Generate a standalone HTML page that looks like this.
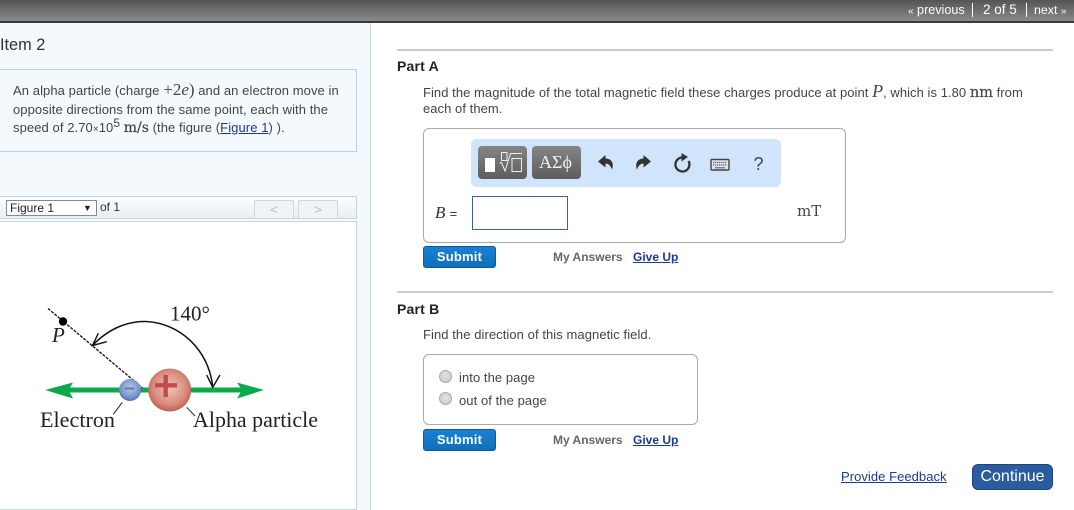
<!DOCTYPE html>
<html><head><meta charset="utf-8"><style>
html,body{margin:0;padding:0;width:1074px;height:510px;overflow:hidden;background:#fff;font-family:"Liberation Sans",sans-serif;color:#444}
.a{position:absolute;white-space:nowrap}
.t{font-size:13px;line-height:16px;letter-spacing:.07px}
.m{font-family:"Liberation Serif",serif}
.u{font-family:"DejaVu Serif",serif;letter-spacing:0}
.b{font-weight:bold}
a{color:#1c3a8c;text-decoration:underline}
.sub{position:absolute;width:71px;height:20px;background:linear-gradient(#1a80d0,#0f70bd);border:1px solid #0c5a9c;border-radius:3px;color:#fff;font:bold 13px/20px "Liberation Sans",sans-serif;text-align:center;letter-spacing:.2px}
.box{position:absolute;border:1px solid #aaa;border-radius:6px;box-sizing:border-box;background:#fff}
.hr{position:absolute;left:397px;width:656px;height:2px;background:#ccc}
.tb{position:absolute;top:146px;height:33px;width:49px;border-radius:4px;background:linear-gradient(#858585,#5d5d5d)}
.r{position:absolute;left:439px;width:11px;height:11px;border-radius:50%;background:radial-gradient(circle at 50% 40%,#e2e2e2,#c8c8c8);border:1px solid #aaa;box-sizing:content-box}
</style></head><body>
<div class="a" style="left:0;top:0;width:1074px;height:21px;background:linear-gradient(#555,#8a8a8a)"></div>
<div class="a" style="left:0;top:21px;width:1074px;height:2px;background:#3a3a3a"></div>

<div class="a" style="left:0;top:23px;width:370px;height:487px;background:#f4f9fe;border-right:1px solid #c5d5e5"></div>
<div class="a" style="left:0;top:36px;font-size:16.3px;line-height:19px;color:#333">Item 2</div>
<div class="a" style="left:-1px;top:69px;width:356px;height:81px;border:1px solid #bfd0dc"></div>
<div class="a t" style="left:13px;top:81px;line-height:18.5px;letter-spacing:.08px">An alpha particle (charge <span class="m" style="font-size:17px;letter-spacing:0">+2<i>e</i>)</span> and an electron move in<br>opposite directions from the same point, each with the<br>speed of 2.70<span style="font-size:10px">×</span>10<span style="font-size:12px;position:relative;top:-5px;letter-spacing:0">5</span> <span class="u" style="font-size:14px;-webkit-text-stroke:.2px #444">m/s</span> (the figure (<a href="#">Figure 1</a>) ).</div>

<div class="a" style="left:-1px;top:196px;width:356px;height:21px;border:1px solid #c5d5e0;background:linear-gradient(#fbfcfd,#ebeef0)"></div>
<div class="a" style="left:6px;top:200px;width:89px;height:14px;border:1px solid #888;background:#fff;font-size:12px;line-height:14px;color:#222;text-indent:3px">Figure 1<span style="position:absolute;left:76px;top:0;font-size:9px;text-indent:0">▼</span></div>
<div class="a" style="left:100px;top:200px;font-size:12px;line-height:15px;color:#333">of 1</div>
<div class="a" style="left:254px;top:200px;width:38px;height:17px;border:1px solid #d5d5d5;background:#f2f3f4;border-radius:2px;text-align:center;color:#bbb;font-size:13px;line-height:17px">&lt;</div>
<div class="a" style="left:298px;top:200px;width:38px;height:17px;border:1px solid #d5d5d5;background:#f2f3f4;border-radius:2px;text-align:center;color:#bbb;font-size:13px;line-height:17px">&gt;</div>
<div class="a" style="left:-1px;top:221px;width:356px;height:287px;background:#fff;border:1px solid #c5d5e0"></div>

<svg class="a" style="left:0;top:280px" width="356" height="160" viewBox="0 280 356 160">
<defs>
<radialGradient id="gb" cx="50%" cy="40%" r="60%"><stop offset="0" stop-color="#b8c8e6"/><stop offset=".7" stop-color="#7a96cc"/><stop offset="1" stop-color="#4d6fae"/></radialGradient>
<radialGradient id="gr" cx="50%" cy="45%" r="55%"><stop offset="0" stop-color="#eec4b4"/><stop offset=".7" stop-color="#d98c7c"/><stop offset="1" stop-color="#bf5f55"/></radialGradient>
</defs>
<path d="M48 308.5L145 390" stroke="#111" stroke-width="1.3" stroke-dasharray="3 1.2" fill="none"/>
<circle cx="63" cy="321.500" r="4.200" fill="#000"/>
<text x="52" y="342" font-family="Liberation Serif" font-style="italic" font-size="21" fill="#222">P</text>
<path d="M66 390H246" stroke="#0ba84e" stroke-width="5"/>
<path d="M45 390L73 382.500L68.500 390L73 398.500Z" fill="#0ba84e"/>
<path d="M264 390L237 382.500L242 390L237 398.500Z" fill="#0ba84e"/>
<path d="M92.500 345.500C110 327 130 321 146 321.500C180 323 209 350 212.700 387" stroke="#111" stroke-width="1.5" fill="none"/>
<path d="M98.300 333.300L92.500 345.500L106.700 341.700M206.700 375L212.700 387.300L220 375" stroke="#111" stroke-width="1.4" fill="none"/>
<circle cx="130" cy="390" r="11" fill="url(#gb)"/>
<rect x="125" y="387.500" width="9" height="2" fill="#5a7ab5"/>
<circle cx="169.700" cy="390" r="21.500" fill="url(#gr)"/>
<path d="M155 385.300H177M165.700 375V397" stroke="#c44a50" stroke-width="4.400"/>
<path d="M122.300 402.300L113.300 414.300M186.700 407.300L195 416" stroke="#222" stroke-width="1"/>
<text x="40" y="427" font-family="Liberation Serif" font-size="22" fill="#222" textLength="75" lengthAdjust="spacingAndGlyphs">Electron</text>
<text x="193" y="427" font-family="Liberation Serif" font-size="22" fill="#222" textLength="125" lengthAdjust="spacingAndGlyphs">Alpha particle</text>
<text x="170" y="320.500" font-family="Liberation Serif" font-size="21" fill="#222">140°</text>
</svg>

<div class="a" style="left:908px;top:2px;font-size:12.6px;line-height:16px;color:#fff"><span style="font-size:10px">«</span> previous</div>
<div class="a" style="left:972px;top:3px;width:1px;height:14px;background:#fff"></div>
<div class="a" style="left:983px;top:1px;font-size:13.5px;line-height:17px;color:#fff">2 of 5</div>
<div class="a" style="left:1026px;top:3px;width:1px;height:14px;background:#fff"></div>
<div class="a" style="left:1034px;top:2px;font-size:12.4px;line-height:16px;color:#fff">next <span style="font-size:10px">»</span></div>

<div class="hr" style="top:49px"></div>
<div class="a b" style="left:397px;top:58px;font-size:14px;line-height:16px;color:#222;letter-spacing:.2px">Part A</div>
<div class="a t" style="left:423px;top:85px;letter-spacing:.05px">Find the magnitude of the total magnetic field these charges produce at point <i class="m" style="font-size:18px;letter-spacing:0;line-height:10px">P</i>, which is 1.80 <span class="u" style="font-size:14.5px;-webkit-text-stroke:.2px #444;line-height:10px">nm</span> from<br>each of them.</div>

<div class="box" style="left:423px;top:128px;width:423px;height:115px"></div>
<div class="a" style="left:471px;top:139px;width:310px;height:48px;background:#d0e4fb;border-radius:6px"></div>
<div class="tb" style="left:478px"></div>
<div class="tb" style="left:532px"></div>
<svg class="a" style="left:478px;top:146px" width="300" height="33" viewBox="478 146 300 33">
<rect x="485" y="158" width="10" height="14" fill="#fff"/>
<rect x="501.500" y="152.500" width="5.500" height="8" fill="none" stroke="#eee"/>
<path d="M499.500 163L501.500 162.500L505 171L510.500 153.500H522" fill="none" stroke="#eee" stroke-width="1"/>
<rect x="512" y="158.500" width="9.500" height="13" fill="none" stroke="#eee"/>
<text x="539" y="168" font-family="Liberation Serif" font-size="18" fill="#f2f2f2">ΑΣϕ</text>
<path d="M598 161.500L605.500 155V158.500C611 158.500 614.500 163 612 169.500C610.500 165.500 608.500 163.500 605.500 163.500V167.500Z" fill="#333"/>
<path d="M651 161.500L643.500 155V158.500C638 158.500 634.500 163 637 169.500C638.500 165.500 640.500 163.500 643.500 163.500V167.500Z" fill="#333"/>
<path d="M682 157.500A7 7 0 1 0 688.500 161" fill="none" stroke="#333" stroke-width="2.300"/>
<path d="M681.500 153L681.500 161.500L688 157Z" fill="#333"/>
<rect x="711" y="159.500" width="18" height="10.500" rx="1" fill="#dfe6ee" stroke="#444" stroke-width="1.400"/>
<path d="M713 162.500h14M713 165h14" stroke="#667" stroke-width="1.200" stroke-dasharray="1.300 .7"/>
<path d="M715 167.800h10" stroke="#667" stroke-width="1.200"/>
<text x="753.500" y="170" font-family="Liberation Sans" font-size="18" fill="#444">?</text>
</svg>
<div class="a m" style="left:435px;top:204px;font-size:17px;line-height:17px;color:#333"><i>B</i> <span style="font-family:'Liberation Sans';font-size:13px">=</span></div>
<div class="a" style="left:472px;top:196px;width:94px;height:32px;border:1px solid #3a669c;background:#fff"></div>
<div class="a u" style="left:797px;top:203px;font-size:15px;line-height:17px;color:#444">mT</div>

<div class="sub" style="left:423px;top:246px">Submit</div>
<div class="a b" style="left:553px;top:249px;font-size:12px;line-height:16px;color:#666">My Answers</div>
<div class="a b" style="left:633px;top:249px;font-size:12px;line-height:16px"><a href="#">Give Up</a></div>

<div class="hr" style="top:291px"></div>
<div class="a b" style="left:397px;top:301px;font-size:14px;line-height:16px;color:#222;letter-spacing:.2px">Part B</div>
<div class="a t" style="left:423px;top:327px">Find the direction of this magnetic field.</div>
<div class="box" style="left:423px;top:354px;width:275px;height:71px"></div>
<div class="r" style="top:370px"></div>
<div class="r" style="top:392px"></div>
<div class="a t" style="left:459px;top:369.500px">into the page</div>
<div class="a t" style="left:459px;top:392.500px">out of the page</div>

<div class="sub" style="left:423px;top:429px">Submit</div>
<div class="a b" style="left:553px;top:432px;font-size:12px;line-height:16px;color:#666">My Answers</div>
<div class="a b" style="left:633px;top:432px;font-size:12px;line-height:16px"><a href="#">Give Up</a></div>

<div class="a" style="left:841px;top:469px;font-size:13px;line-height:16px;letter-spacing:.05px"><a href="#">Provide Feedback</a></div>
<div class="a" style="left:972px;top:464px;width:79px;height:24px;background:#2b5c9e;border:1px solid #1d4580;border-radius:6px;color:#fff;font-size:16px;line-height:24px;text-align:center">Continue</div>
</body></html>
